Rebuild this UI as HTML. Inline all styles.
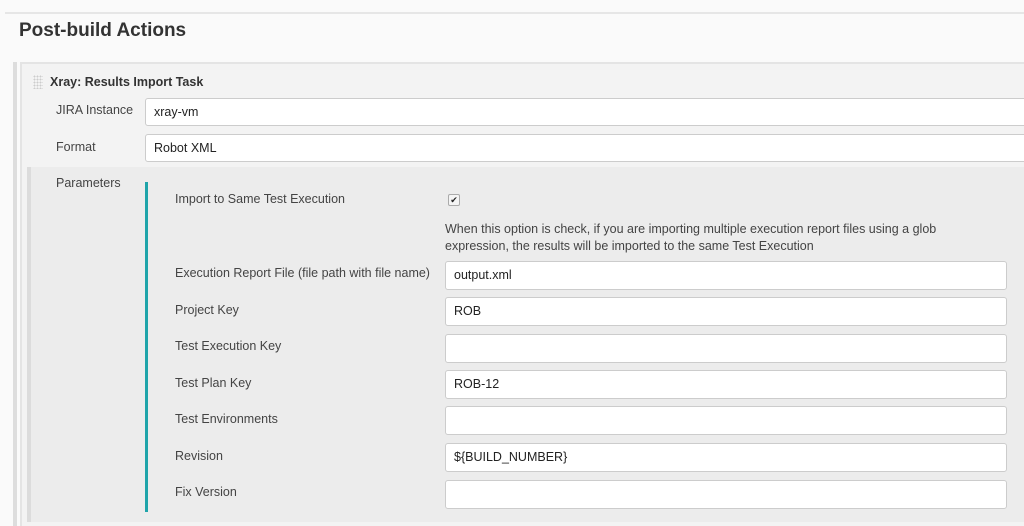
<!DOCTYPE html>
<html><head><meta charset="utf-8"><style>
body{margin:0;width:1024px;height:526px;overflow:hidden;background:#fafafa;font-family:"Liberation Sans",sans-serif;color:#333;position:relative}
.a{position:absolute}
.line{left:5px;top:12px;width:1019px;height:2px;background:#e6e6e6}
h1{position:absolute;left:19px;top:20px;margin:0;font-size:19px;font-weight:bold;color:#333}
.outer{left:13px;top:62px;width:4px;height:464px;background:#ddd}
.inner{left:20px;top:62px;width:1004px;height:464px;background:#f3f3f3;border-top:2px solid #e4e4e4;border-left:2px solid #e4e4e4;box-sizing:border-box}
.grip{left:33px;top:75px;width:10px;height:14px;background-image:radial-gradient(#ccc 40%,transparent 45%);background-size:3px 3px}
.hd{left:50px;top:75px;font-size:12.5px;font-weight:bold;color:#333}
.lbl{font-size:12.5px;color:#444}
.in{background:#fff;border:1px solid #ccc;border-radius:3px;box-sizing:border-box;font-size:12.5px;color:#222;padding-left:8px;line-height:26px}
.params{left:27px;top:167px;width:997px;height:355px;background:#ececec}
.pb{left:27px;top:167px;width:4px;height:355px;background:#dcdcdc}
.teal{left:145px;top:182px;width:3px;height:330px;background:#1fa4aa}
.cb{left:448px;top:194px;width:10px;height:10px;border:1px solid #aaa;border-radius:2px;background:#f4f4f4;font-size:9px;line-height:10px;text-align:center;color:#222}
.help{left:445px;top:221px;font-size:12.5px;color:#444;line-height:17px}
</style></head><body>
<div class="a line"></div>
<h1>Post-build Actions</h1>
<div class="a outer"></div>
<div class="a inner"></div>
<div class="a grip"></div>
<div class="a hd">Xray: Results Import Task</div>
<div class="a lbl" style="left:56px;top:103px">JIRA Instance</div>
<div class="a in" style="left:145px;top:98px;width:890px;height:28px">xray-vm</div>
<div class="a lbl" style="left:56px;top:140px">Format</div>
<div class="a in" style="left:145px;top:134px;width:890px;height:28px">Robot XML</div>
<div class="a params"></div>
<div class="a pb"></div>
<div class="a lbl" style="left:56px;top:176px">Parameters</div>
<div class="a teal"></div>
<div class="a lbl" style="left:175px;top:192px">Import to Same Test Execution</div>
<div class="a cb">✔</div>
<div class="a help">When this option is check, if you are importing multiple execution report files using a glob<br>expression, the results will be imported to the same Test Execution</div>
<div class="a lbl" style="left:175px;top:266px">Execution Report File (file path with file name)</div>
<div class="a in" style="left:445px;top:261px;width:562px;height:29px">output.xml</div>
<div class="a lbl" style="left:175px;top:303px">Project Key</div>
<div class="a in" style="left:445px;top:297px;width:562px;height:29px">ROB</div>
<div class="a lbl" style="left:175px;top:339px">Test Execution Key</div>
<div class="a in" style="left:445px;top:334px;width:562px;height:29px"></div>
<div class="a lbl" style="left:175px;top:376px">Test Plan Key</div>
<div class="a in" style="left:445px;top:370px;width:562px;height:29px">ROB-12</div>
<div class="a lbl" style="left:175px;top:412px">Test Environments</div>
<div class="a in" style="left:445px;top:406px;width:562px;height:29px"></div>
<div class="a lbl" style="left:175px;top:449px">Revision</div>
<div class="a in" style="left:445px;top:443px;width:562px;height:29px">${BUILD_NUMBER}</div>
<div class="a lbl" style="left:175px;top:485px">Fix Version</div>
<div class="a in" style="left:445px;top:480px;width:562px;height:29px"></div>
</body></html>
